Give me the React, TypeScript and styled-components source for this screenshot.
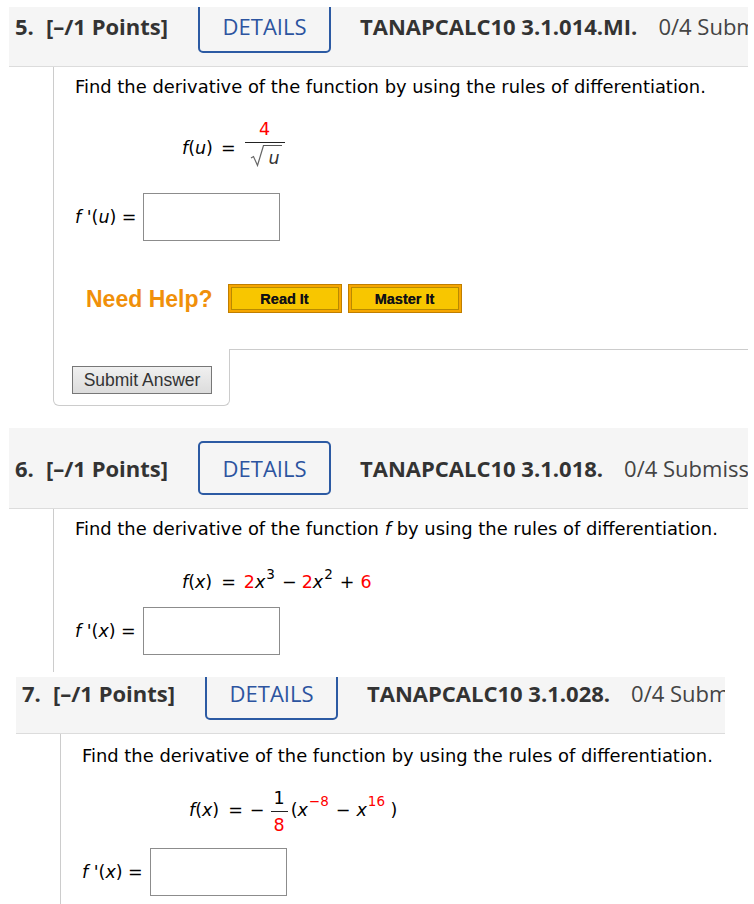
import React from 'react';
import styled, { createGlobalStyle } from 'styled-components';

const Global = createGlobalStyle`
  html, body { margin: 0; padding: 0; background: #fff; }
  body { width: 754px; height: 904px; overflow: hidden; }
  * { box-sizing: border-box; }
`;

const Page = styled.div`
  width: 754px;
  height: 904px;
  overflow: hidden;
  background: #fff;
  padding-top: 7px;
  display: flex;
  flex-direction: column;
`;

const Question = styled.section<{ $shift: number; $width: number; $top?: number }>`
  flex-shrink: 0;
  margin-left: ${p => p.$shift}px;
  margin-top: ${p => p.$top ?? 0}px;
  width: ${p => p.$width}px;
  overflow: hidden;
`;

const HeaderClip = styled.div<{ $cut: number }>`
  overflow: hidden;
  & > header { margin-top: -${p => p.$cut}px; }
`;

const Header = styled.header`
  height: 81px;
  background: #f5f5f5;
  border-bottom: 1px solid #dcdcdc;
  display: flex;
  align-items: center;
  padding-left: 6px;
  white-space: nowrap;
  font-family: "Open Sans", sans-serif;
  font-size: 22px;
  color: #333;
`;

const QNum = styled.span`
  font-weight: 700;
  width: 31px;
  flex-shrink: 0;
`;

const Points = styled.span`
  font-weight: 700;
  flex-shrink: 0;
`;

const DetailsButton = styled.span`
  flex-shrink: 0;
  margin-left: 30px;
  width: 133px;
  height: 54px;
  border: 2px solid #2c5aa3;
  border-radius: 5px;
  color: #2c54a0;
  display: flex;
  align-items: center;
  justify-content: center;
  font-weight: 400;
`;

const Code = styled.span`
  flex-shrink: 0;
  margin-left: 29px;
  font-weight: 700;
  color: #333;
`;

const Subs = styled.span`
  flex-shrink: 0;
  margin-left: 21px;
  color: #444;
`;

const Body = styled.div<{ $pt?: number; $pb?: number }>`
  margin-left: 44px;
  border-left: 1px solid #cccccc;
  padding: ${p => p.$pt ?? 9}px 0 ${p => p.$pb ?? 0}px 21px;
  font-family: "DejaVu Sans", Verdana, sans-serif;
  font-size: 17.9px;
  line-height: 22px;
  color: #000;
`;

const Prompt = styled.p`
  margin: 0;
  white-space: nowrap;
`;

const MathRow = styled.div<{ $top: number }>`
  margin-top: ${p => p.$top}px;
  padding-left: 107px;
  white-space: pre;
  font-family: "DejaVu Sans", Verdana, sans-serif;
  font-size: 17.5px;
  line-height: 22px;
`;

const V = styled.i`
  font-style: italic;
`;

const Red = styled.span`
  color: #ff0000;
`;

const Op = styled.span<{ $l?: number; $r?: number }>`
  margin: 0 ${p => p.$r ?? 6}px 0 ${p => p.$l ?? 6}px;
`;

const Sup = styled.sup<{ $raise: number }>`
  font-size: 13.5px;
  line-height: 0;
  vertical-align: ${p => p.$raise}px;
  margin-left: 1px;
`;

const Frac = styled.span<{ $raise: number }>`
  display: inline-flex;
  flex-direction: column;
  align-items: center;
  vertical-align: ${p => p.$raise}px;
  margin: 0 3px;
`;

const Numer = styled.span<{ $pad: number }>`
  padding: 0 ${p => p.$pad}px 2px;
  border-bottom: 1px solid #222;
  align-self: stretch;
  text-align: center;
`;

const Denom = styled.span`
  padding-top: 2px;
  display: inline-flex;
  justify-content: center;
`;

const SqrtWrap = styled.span`
  display: inline-flex;
  align-items: stretch;
  padding: 0 3px 0 5px;
`;

const Radicand = styled.span`
  border-top: 1px solid #555;
  padding: 1px 2px 0 6px;
  margin-left: -1px;
  color: #333;
`;

const AnswerRow = styled.div<{ $top: number }>`
  margin-top: ${p => p.$top}px;
  display: flex;
  align-items: center;
  gap: 9px;
`;

const AnsLabel = styled.span`
  white-space: pre;
  width: 59px;
  font-size: 17.5px;
`;

const AnswerBox = styled.input`
  width: 137px;
  height: 48px;
  border: 1px solid #8c8c8c;
  border-radius: 0;
  background: #fff;
  margin: 0;
  padding: 0 4px;
  font-size: 16px;
`;

const HelpRow = styled.div`
  margin-top: 43px;
  padding-left: 11px;
  display: flex;
  align-items: center;
`;

const NeedHelp = styled.span`
  font-family: "Liberation Sans", Arial, sans-serif;
  font-weight: 700;
  font-size: 23px;
  color: #f0900a;
  margin-right: 15px;
`;

const HelpButton = styled.span`
  width: 114px;
  height: 29px;
  border: 1px solid #c07e00;
  background: #f6a600;
  padding: 2px;
  margin-right: 6px;
  display: flex;
`;

const HelpInner = styled.span`
  flex: 1;
  border: 1px solid #b98a00;
  background: #f8c600;
  display: flex;
  align-items: center;
  justify-content: center;
  font-family: "Liberation Sans", Arial, sans-serif;
  font-weight: 700;
  font-size: 14.5px;
  color: #111;
  text-shadow: 0 0 0.6px #333;
`;

const Footer = styled.div`
  display: flex;
  margin-left: 44px;
`;

const SubmitBox = styled.div`
  width: 177px;
  height: 57px;
  border: 1px solid #cccccc;
  border-top: none;
  border-radius: 0 0 6px 6px;
  padding: 17px 0 0 18px;
`;

const FooterRule = styled.div`
  flex: 1;
  border-top: 1px solid #cccccc;
`;

const SubmitButton = styled.button`
  width: 140px;
  height: 28px;
  margin: 0;
  padding: 0;
  border: 1px solid #777;
  border-radius: 0;
  background: linear-gradient(#f0f0f0, #dcdcdc);
  font-family: "Liberation Sans", Arial, sans-serif;
  font-size: 17.5px;
  color: #333;
`;

function Radical() {
  return (
    <svg width="14" height="22" viewBox="0 0 14 22" aria-hidden="true">
      <path d="M1 13 L3.5 11.5 L7.5 20.5 L13.5 0.5" fill="none" stroke="#666" strokeWidth="1.2" />
    </svg>
  );
}

type HeadProps = { n: string; code: string; subs: string };

function QHeader({ n, code, subs }: HeadProps) {
  return (
    <Header>
      <QNum>{n}</QNum>
      <Points>[–/1 Points]</Points>
      <DetailsButton>DETAILS</DetailsButton>
      <Code>{code}</Code>
      <Subs>{subs}</Subs>
    </Header>
  );
}

function Answer({ v, top }: { v: string; top: number }) {
  return (
    <AnswerRow $top={top}>
      <AnsLabel>
        <V>f</V> '(<V>{v}</V>) =
      </AnsLabel>
      <AnswerBox type="text" aria-label={`f'(${v})`} />
    </AnswerRow>
  );
}

export default function App() {
  return (
    <>
      <Global />
      <Page>
        <Question $shift={9} $width={739}>
          <HeaderClip $cut={21}>
            <QHeader n="5." code="TANAPCALC10 3.1.014.MI." subs="0/4 Submissions Used" />
          </HeaderClip>
          <Body $pb={36}>
            <Prompt>Find the derivative of the function by using the rules of differentiation.</Prompt>
            <MathRow $top={20}>
              <V>f</V>(<V>u</V>)<Op $l={8} $r={6}>=</Op>
              <Frac $raise={19}>
                <Numer $pad={0}>
                  <Red>4</Red>
                </Numer>
                <Denom>
                  <SqrtWrap>
                    <Radical />
                    <Radicand>
                      <V>u</V>
                    </Radicand>
                  </SqrtWrap>
                </Denom>
              </Frac>
            </MathRow>
            <Answer v="u" top={24} />
            <HelpRow>
              <NeedHelp>Need Help?</NeedHelp>
              <HelpButton>
                <HelpInner>Read It</HelpInner>
              </HelpButton>
              <HelpButton>
                <HelpInner>Master It</HelpInner>
              </HelpButton>
            </HelpRow>
          </Body>
          <Footer>
            <SubmitBox>
              <SubmitButton type="button">Submit Answer</SubmitButton>
            </SubmitBox>
            <FooterRule />
          </Footer>
        </Question>

        <Question $shift={9} $width={739} $top={22}>
          <QHeader n="6." code="TANAPCALC10 3.1.018." subs="0/4 Submissions Used" />
          <Body $pb={17}>
            <Prompt>
              Find the derivative of the function <V>f</V> by using the rules of differentiation.
            </Prompt>
            <MathRow $top={31}>
              <V>f</V>(<V>x</V>)<Op $l={9} $r={8}>=</Op>
              <Red>2</Red>
              <V>x</V>
              <Sup $raise={9}>3</Sup>
              <Op $l={7} $r={5}>−</Op>
              <Red>2</Red>
              <V>x</V>
              <Sup $raise={9}>2</Sup>
              <Op $l={7} $r={6}>+</Op>
              <Red>6</Red>
            </MathRow>
            <Answer v="x" top={14} />
          </Body>
        </Question>

        <Question $shift={16} $width={709} $top={5}>
          <HeaderClip $cut={24}>
            <QHeader n="7." code="TANAPCALC10 3.1.028." subs="0/4 Submissions Used" />
          </HeaderClip>
          <Body $pt={11} $pb={20}>
            <Prompt>Find the derivative of the function by using the rules of differentiation.</Prompt>
            <MathRow $top={20}>
              <V>f</V>(<V>x</V>)<Op $l={9} $r={5}>=</Op>
              <Op $l={2} $r={3}>−</Op>
              <Frac $raise={12}>
                <Numer $pad={3}>1</Numer>
                <Denom>
                  <Red>8</Red>
                </Denom>
              </Frac>
              (<V>x</V>
              <Sup $raise={10}>
                <Red>−8</Red>
              </Sup>
              <Op $l={7} $r={6}>−</Op>
              <V>x</V>
              <Sup $raise={10}>
                <Red>16</Red>
              </Sup>
              <span> )</span>
            </MathRow>
            <Answer v="x" top={12} />
          </Body>
        </Question>
      </Page>
    </>
  );
}
